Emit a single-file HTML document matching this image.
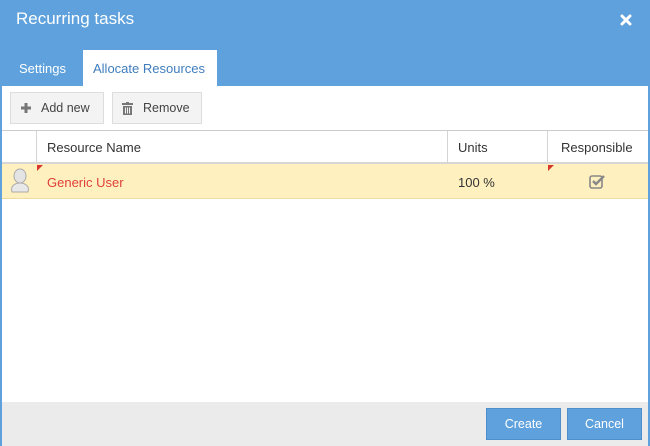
<!DOCTYPE html>
<html><head><style>
*{margin:0;padding:0;box-sizing:border-box}
body{width:650px;height:446px;background:#5ea1dc;font-family:"Liberation Sans",sans-serif;position:relative;overflow:hidden;font-size:13px;color:#333}
.abs{position:absolute}
.title{left:16px;top:9px;color:#fff;font-size:17px}
.tab1{left:19px;top:61px;color:#fff;font-size:13px}
.tab2{left:83px;top:50px;width:134px;height:37px;background:#fff;color:#3f7dbd;padding:11px 0 0 10px;font-size:13px}
.content{left:2px;top:86px;width:646px;height:316px;background:#fff}
.btn{background:#f3f3f3;border:1px solid #ddd;height:32px;top:92px;color:#444;font-size:12.5px;display:flex;align-items:center;padding-left:9px}
.hdr{left:2px;top:130px;width:646px;height:34px;border-top:1px solid #ccc;border-bottom:2px solid #d6d6d6;}
.row{left:2px;top:164px;width:646px;height:35px;background:#fff0bf;border-bottom:1px solid #f0dca0}
.vline{position:absolute;top:0;width:1px;height:32px;background:#d4d4d4}
.footer{left:2px;top:402px;width:646px;height:44px;background:#ebebeb}
.fb{top:408px;height:32px;background:#5ea1dc;border:1px solid #4d8fcb;color:#fff;text-align:center;padding-top:8px;font-size:12.5px}
.tri{width:0;height:0;border-top:6px solid #d9372a;border-right:6px solid transparent}
</style></head><body>
<div class="abs title">Recurring tasks</div>
<svg class="abs" style="left:620px;top:14px" width="12" height="12" viewBox="0 0 12 12"><path d="M2 2l8 8M10 2l-8 8" stroke="#fff" stroke-width="3" stroke-linecap="round"/></svg>
<div class="abs tab1">Settings</div>
<div class="abs tab2">Allocate Resources</div>
<div class="abs content"></div>
<div class="abs btn" style="left:10px;width:94px"><svg width="12" height="12" viewBox="0 0 12 12"><path d="M6 1v10M1 6h10" stroke="#777" stroke-width="3"/></svg><span style="margin-left:9px">Add new</span></div>
<div class="abs btn" style="left:112px;width:90px"><svg width="11" height="13" viewBox="0 0 11 13"><rect x="0" y="1" width="11" height="2" fill="#777"/><rect x="4" y="0" width="3" height="2" fill="#777"/><path d="M1 4h9v9H1z" fill="#777"/><path d="M3.5 5.5v6M5.5 5.5v6M7.5 5.5v6" stroke="#f3f3f3"/></svg><span style="margin-left:10px">Remove</span></div>
<div class="abs hdr">
<div class="vline" style="left:34px"></div><div class="vline" style="left:445px"></div><div class="vline" style="left:545px"></div>
<span class="abs" style="left:45px;top:9px">Resource Name</span>
<span class="abs" style="left:456px;top:9px">Units</span>
<span class="abs" style="left:559px;top:9px">Responsible</span>
</div>
<div class="abs row">
<svg class="abs" style="left:7px;top:3px" width="22" height="27" viewBox="0 0 22 27"><ellipse cx="11" cy="9" rx="6" ry="7" fill="#e4e4e4" stroke="#aaa"/><path d="M3 25c-2-6 3-9 8-9s10 3 8 9z" fill="#e8e8e8" stroke="#aaa"/></svg>
<div class="abs tri" style="left:35px;top:1px"></div>
<span class="abs" style="left:45px;top:11px;color:#e0403a">Generic User</span>
<span class="abs" style="left:456px;top:11px">100 %</span>
<div class="abs tri" style="left:546px;top:1px"></div>
<svg class="abs" style="left:587px;top:10px" width="17" height="15" viewBox="0 0 17 15"><rect x="1" y="2" width="12" height="12" rx="2" fill="none" stroke="#888" stroke-width="1.6"/><path d="M4 7l3 3 8-8" fill="none" stroke="#888" stroke-width="2.4"/></svg>
</div>
<div class="abs footer"></div>
<div class="abs fb" style="left:486px;width:75px">Create</div>
<div class="abs fb" style="left:567px;width:75px">Cancel</div>
</body></html>
